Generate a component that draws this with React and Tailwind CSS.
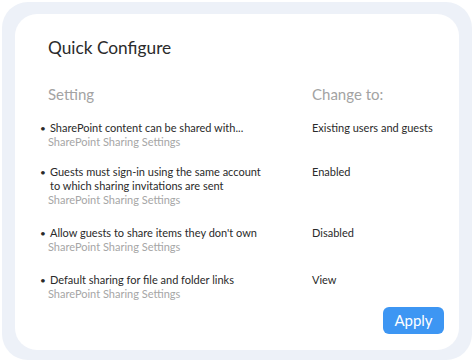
const rows = [
  { text: ['SharePoint content can be shared with...'], value: 'Existing users and guests', mt: 'mt-[17px]' },
  { text: ['Guests must sign-in using the same account', 'to which sharing invitations are sent'], value: 'Enabled', mt: 'mt-[16px]' },
  { text: ["Allow guests to share items they don't own"], value: 'Disabled', mt: 'mt-[19px]' },
  { text: ['Default sharing for file and folder links'], value: 'View', mt: 'mt-[19px]' },
];

export default function App() {
  return (
    <div className="w-[474px] h-[363px] bg-white p-[2px] font-['Lato',sans-serif]">
      <div className="w-[470px] h-[358px] bg-[#edf1f8] rounded-[26px] pl-[13px] pr-[13px] pt-[12px]">
        <div className="w-[444px] h-[336px] bg-white rounded-[22px] px-[25px] pt-[24px]">
          <h1 className="ml-[8px] text-[17.3px] leading-[20px] text-[#2b2b2b] font-normal">Quick Configure</h1>
          <div className="mt-[26px] flex text-[15px] leading-[20px] text-[#a3a3a3]">
            <div className="w-[272px] pl-[8px]">Setting</div>
            <div>Change to:</div>
          </div>
          {rows.map((r, i) => (
            <div key={i} className={`${r.mt} flex text-[11px] leading-[14px]`}>
              <div className="w-[272px]">
                <div className="flex text-[#2a2a2a]">
                  <span className="w-[10px] text-[10px]">•</span>
                  <div>
                    {r.text.map((t, j) => (
                      <div key={j}>{t}</div>
                    ))}
                  </div>
                </div>
                <div className="pl-[8px] text-[#a6a6a6]">SharePoint Sharing Settings</div>
              </div>
              <div className="text-[#2a2a2a]">{r.value}</div>
            </div>
          ))}
          <div className="flex justify-end mt-[6px] -mr-[10px]">
            <button className="w-[61px] h-[27px] rounded-[6px] bg-[#3d96f3] text-white text-[15px] leading-[27px]">
              Apply
            </button>
          </div>
        </div>
      </div>
    </div>
  );
}
